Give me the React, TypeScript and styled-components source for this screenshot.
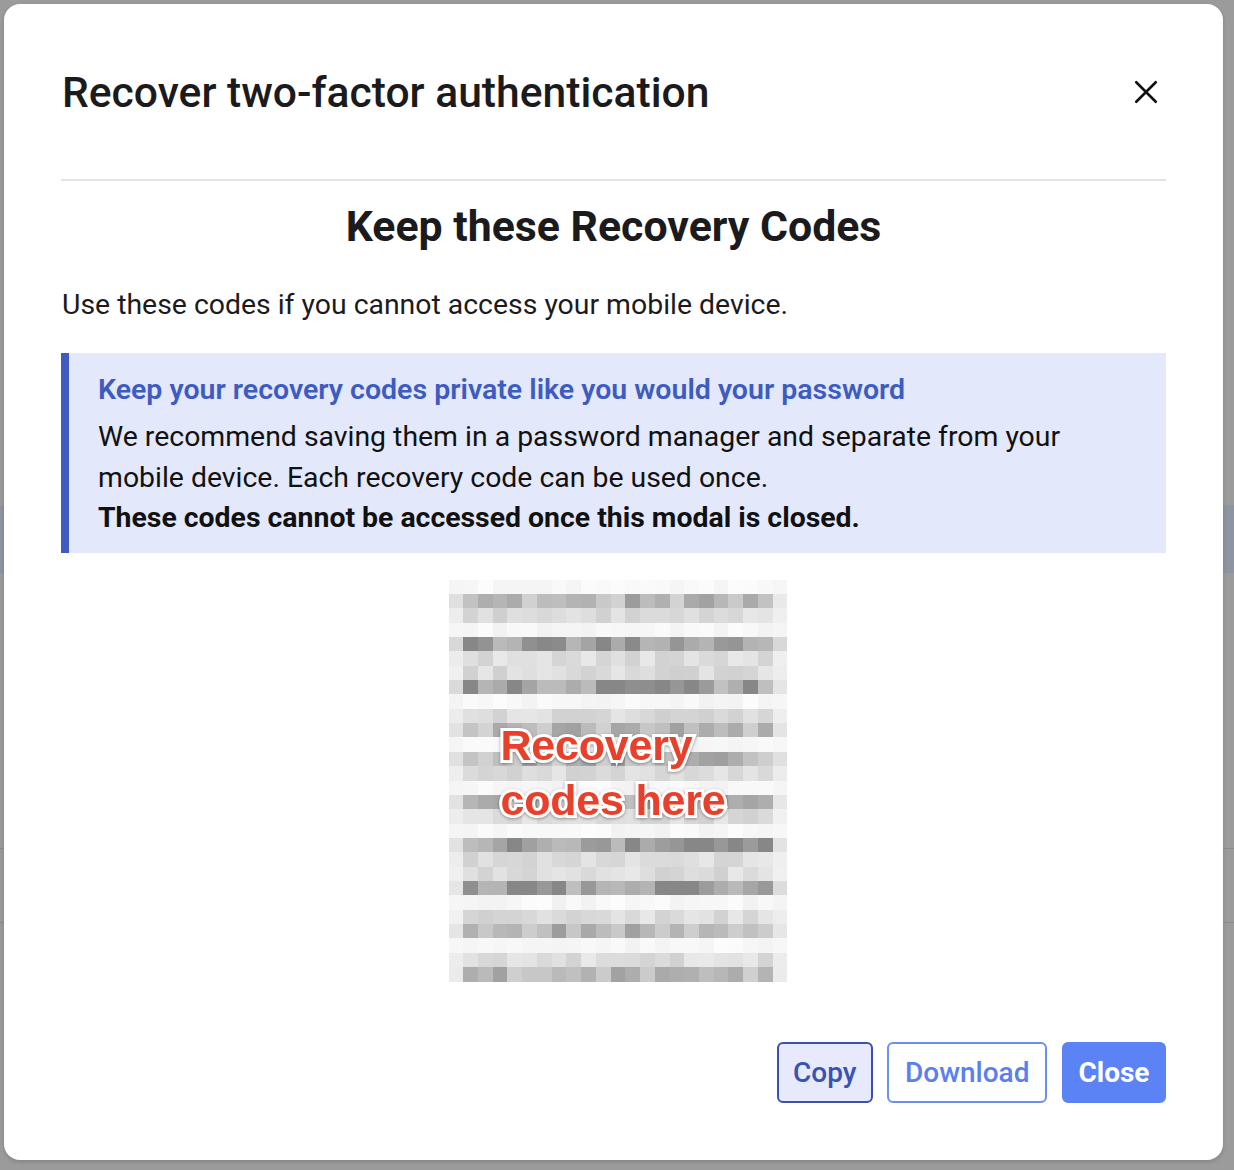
import React from "react";
import styled, { createGlobalStyle } from "styled-components";

const Global = createGlobalStyle`
  html, body { margin: 0; padding: 0; }
  body {
    background: #9b9b9b;
    font-family: Roboto, "Noto Sans", "Liberation Sans", sans-serif;
    width: 1234px;
    height: 1170px;
    overflow: hidden;
  }
`;

const Page = styled.div`
  position: relative;
  width: 1234px;
  height: 1170px;
  background: #9b9b9b;
`;

const BackPage = styled.div`
  display: flex;
  flex-direction: column;
  padding-top: 160px;
  color: #101010;
  font-size: 26px;
`;

const BackRow = styled.div<{ $h: number; $bg?: string; $line?: boolean }>`
  height: ${(p) => p.$h}px;
  background: ${(p) => p.$bg || "transparent"};
  border-bottom: ${(p) => (p.$line ? "1px solid #8c8c8c" : "none")};
`;

const Overlay = styled.div`
  position: absolute;
  inset: 0;
  display: flex;
  justify-content: flex-start;
  align-items: flex-start;
  padding: 4px 0 0 4px;
`;

const Modal = styled.div`
  width: 1219px;
  height: 1156px;
  box-sizing: border-box;
  background: #ffffff;
  border-radius: 16px;
  box-shadow: 0 2px 4px rgba(0, 0, 0, 0.15);
  padding: 0 57px;
  display: flex;
  flex-direction: column;
`;

const Header = styled.div`
  height: 175px;
  display: flex;
  align-items: center;
  justify-content: space-between;
  border-bottom: 2px solid #e4e4e4;
`;

const Title = styled.h1`
  margin: 0 0 0 1px;
  font-size: 42.6px;
  font-weight: 500;
  color: #1b1b1d;
`;

const CloseIcon = styled.button`
  width: 30px;
  height: 30px;
  padding: 0;
  border: none;
  background: none;
  display: flex;
  align-items: center;
  justify-content: center;
  margin-right: 5px;
  cursor: pointer;
`;

const Heading = styled.h2`
  margin: 20px 0 0;
  text-align: center;
  font-size: 42.8px;
  font-weight: 700;
  color: #1b1b1d;
  line-height: 50px;
`;

const Lead = styled.p`
  margin: 36px 0 0 1px;
  font-size: 28.4px;
  color: #1b1b1d;
  line-height: 36px;
`;

const Callout = styled.div`
  margin-top: 30px;
  background: #e3e8fb;
  border-left: 8px solid #3f5bbf;
  padding: 17px 28px 14px 29px;
  display: flex;
  flex-direction: column;
`;

const CalloutTitle = styled.div`
  color: #3d5bc0;
  font-size: 28.5px;
  font-weight: 600;
  line-height: 40px;
  margin-bottom: 7px;
`;

const CalloutText = styled.div<{ $bold?: boolean }>`
  color: #111;
  font-size: 28.4px;
  font-weight: ${(p) => (p.$bold ? 700 : 400)};
  line-height: 40.5px;
`;

const CodesArea = styled.div`
  margin-top: 27px;
  display: flex;
  justify-content: center;
  padding-left: 9px;
`;

const CodesBox = styled.div`
  position: relative;
  width: 339px;
  height: 402px;
`;

const PixelGrid = styled.div`
  display: grid;
  grid-template-columns: repeat(23, 14.74px);
  grid-template-rows: repeat(28, 14.36px);
`;

const Pixel = styled.div``;

const Annotation = styled.div`
  position: absolute;
  left: 52px;
  top: 138px;
  font-family: "Liberation Sans", Arial, sans-serif;
  font-weight: 700;
  font-size: 43px;
  line-height: 55px;
  color: #e8402a;
  -webkit-text-stroke: 6px #ffffff;
  paint-order: stroke fill;
  filter: drop-shadow(0 1px 1.5px rgba(0, 0, 0, 0.35));
  letter-spacing: -0.2px;
  white-space: nowrap;
`;

const Footer = styled.div`
  margin-top: auto;
  margin-bottom: 57px;
  display: flex;
  justify-content: flex-end;
  gap: 14.5px;
`;

const Button = styled.button<{ $variant: "soft" | "outline" | "solid" }>`
  height: 61px;
  box-sizing: border-box;
  padding: 0 15px;
  border-radius: 6px;
  font-family: Roboto, "Noto Sans", sans-serif;
  font-size: 28px;
  font-weight: ${(p) => (p.$variant === "solid" ? 700 : 500)};
  cursor: pointer;
  ${(p) =>
    p.$variant === "soft"
      ? `background: #e6eafc; color: #3a52b2; border: 2px solid #3a4fae; padding: 0 14px;`
      : p.$variant === "outline"
      ? `background: #ffffff; color: #5a80ef; border: 2px solid #6b8ef2; padding: 0 16px;`
      : `background: #5b83f5; color: #ffffff; border: 2px solid #5b83f5; padding: 0 14.5px;`}
`;

const rowTypes = "WMLWDLLDWLMWMLWMLWDLLDWLMWLM".split("");
const rowLevel: Record<string, number> = { W: 0.03, L: 0.13, M: 0.28, D: 0.4 };

function makePixels() {
  let seed = 98765;
  const rnd = () => {
    seed = (seed * 1103515245 + 12345) & 0x7fffffff;
    return seed / 0x7fffffff;
  };
  const cells: string[] = [];
  for (let r = 0; r < 28; r++) {
    const base = rowLevel[rowTypes[r]];
    for (let c = 0; c < 23; c++) {
      let v = base * (0.55 + rnd() * 0.75);
      if (rowTypes[r] === "W") v = rnd() * 0.04;
      if (c === 0 || c === 22) v = v * 0.25 + 0.02;
      if (r === 0) v = Math.min(v, 0.025);
      const g = Math.round(252 - v * 265);
      const gg = Math.max(135, Math.min(255, g));
      cells.push(`rgb(${gg},${gg},${gg})`);
    }
  }
  return cells;
}

const pixels = makePixels();

export default function App() {
  return (
    <>
      <Global />
      <Page>
        <BackPage>
          <BackRow $h={345} />
          <BackRow $h={68} $bg="#8f94a3" />
          <BackRow $h={275} $line />
          <BackRow $h={73} $line />
        </BackPage>
        <Overlay>
          <Modal>
            <Header>
              <Title>Recover two-factor authentication</Title>
              <CloseIcon aria-label="Close">
                <svg width="26" height="26" viewBox="0 0 24 24" fill="none" stroke="#111" strokeWidth="2.4" strokeLinecap="round">
                  <path d="M3 3 L21 21 M21 3 L3 21" />
                </svg>
              </CloseIcon>
            </Header>
            <Heading>Keep these Recovery Codes</Heading>
            <Lead>Use these codes if you cannot access your mobile device.</Lead>
            <Callout>
              <CalloutTitle>Keep your recovery codes private like you would your password</CalloutTitle>
              <CalloutText>
                We recommend saving them in a password manager and separate from your
                <br />
                mobile device. Each recovery code can be used once.
              </CalloutText>
              <CalloutText $bold>These codes cannot be accessed once this modal is closed.</CalloutText>
            </Callout>
            <CodesArea>
              <CodesBox>
                <PixelGrid>
                  {pixels.map((bg, i) => (
                    <Pixel key={i} style={{ background: bg }} />
                  ))}
                </PixelGrid>
                <Annotation>
                  Recovery
                  <br />
                  codes here
                </Annotation>
              </CodesBox>
            </CodesArea>
            <Footer>
              <Button $variant="soft">Copy</Button>
              <Button $variant="outline">Download</Button>
              <Button $variant="solid">Close</Button>
            </Footer>
          </Modal>
        </Overlay>
      </Page>
    </>
  );
}
